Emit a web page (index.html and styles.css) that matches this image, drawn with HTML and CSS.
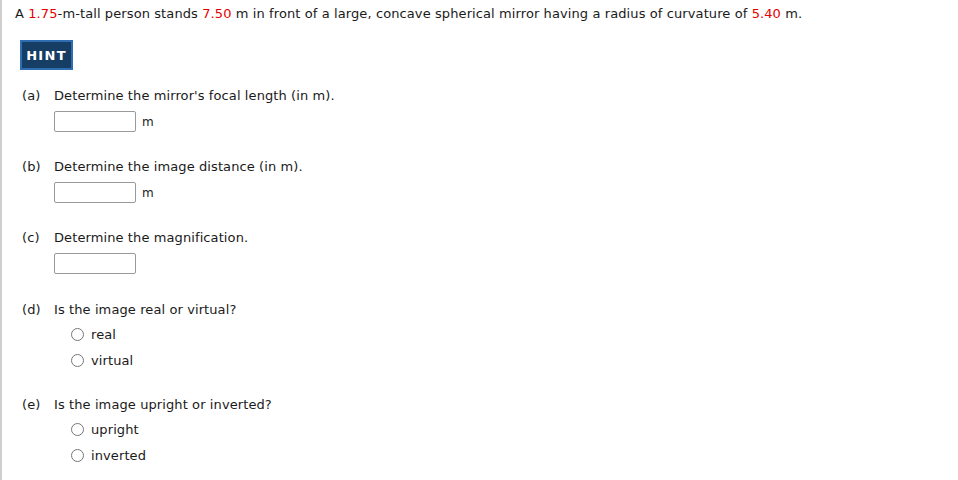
FILE: index.html
```html
<!DOCTYPE html>
<html lang="en">
<head>
  <meta charset="UTF-8" />
  <title>Spherical Mirror</title>
  <link rel="stylesheet" href="styles.css">
</head>
<body>
  <div class="question">
    <p class="prompt">A <span class="num">1.75</span>-m-tall person stands <span class="num">7.50</span> m in front of a large, concave spherical mirror having a radius of curvature of <span class="num">5.40</span> m.</p>

    <button class="hint">HINT</button>

    <div class="part part-first">
      <div class="part-label"><span class="letter">(a)</span> Determine the mirror's focal length (in m).</div>
      <div class="answer"><input type="text" class="field" /> <span class="unit">m</span></div>
    </div>

    <div class="part">
      <div class="part-label"><span class="letter">(b)</span> Determine the image distance (in m).</div>
      <div class="answer"><input type="text" class="field" /> <span class="unit">m</span></div>
    </div>

    <div class="part">
      <div class="part-label"><span class="letter">(c)</span> Determine the magnification.</div>
      <div class="answer"><input type="text" class="field" /></div>
    </div>

    <div class="part part-d">
      <div class="part-label"><span class="letter">(d)</span> Is the image real or virtual?</div>
      <div class="choices">
        <label class="choice"><span class="radio"></span>real</label>
        <label class="choice"><span class="radio"></span>virtual</label>
      </div>
    </div>

    <div class="part part-e">
      <div class="part-label"><span class="letter">(e)</span> Is the image upright or inverted?</div>
      <div class="choices">
        <label class="choice"><span class="radio"></span>upright</label>
        <label class="choice"><span class="radio"></span>inverted</label>
      </div>
    </div>
  </div>
</body>
</html>
```

FILE: styles.css
```css
body {
  margin: 0;
  font-family: Verdana, "DejaVu Sans", sans-serif;
  font-size: 13px;
  letter-spacing: 0.1px;
  color: #1a1a1a;
  background: #ffffff;
}

.question {
  border-left: 2px solid #cfcfcf;
  min-height: 480px;
  box-sizing: border-box;
  padding: 6px 13px 0;
}

.prompt {
  margin: 0;
  line-height: 16px;
}

.num {
  color: #e60000;
}

.hint {
  display: block;
  margin: 18px 0 0 5px;
  width: 53px;
  height: 30px;
  padding: 0;
  background: #163d64;
  border: 2px solid #2f6db3;
  color: #ffffff;
  font-family: Verdana, "DejaVu Sans", sans-serif;
  font-size: 13px;
  font-weight: bold;
  letter-spacing: 1.3px;
}

.part {
  margin-top: 27px;
  padding-left: 7px;
}

.part-first {
  margin-top: 18px;
}

.part-d {
  margin-top: 28px;
}

.part-e {
  margin-top: 24px;
}

.part-label {
  line-height: 16px;
  display: flex;
}

.letter {
  width: 32px;
  flex-shrink: 0;
}

.answer {
  margin-top: 7px;
  padding-left: 32px;
  display: flex;
  align-items: center;
  gap: 6px;
  height: 21px;
}

.field {
  width: 82px;
  height: 21px;
  box-sizing: border-box;
  border: 1px solid #9a9a9a;
  border-radius: 2px;
  margin: 0;
  padding: 0 4px;
}

.unit {
  font-size: 12px;
}

.choices {
  margin-top: 3px;
  padding-left: 49px;
}

.choice {
  display: flex;
  align-items: center;
  height: 26px;
}

.radio {
  width: 11px;
  height: 11px;
  border: 1px solid #777;
  border-radius: 50%;
  margin-right: 7px;
}
```
